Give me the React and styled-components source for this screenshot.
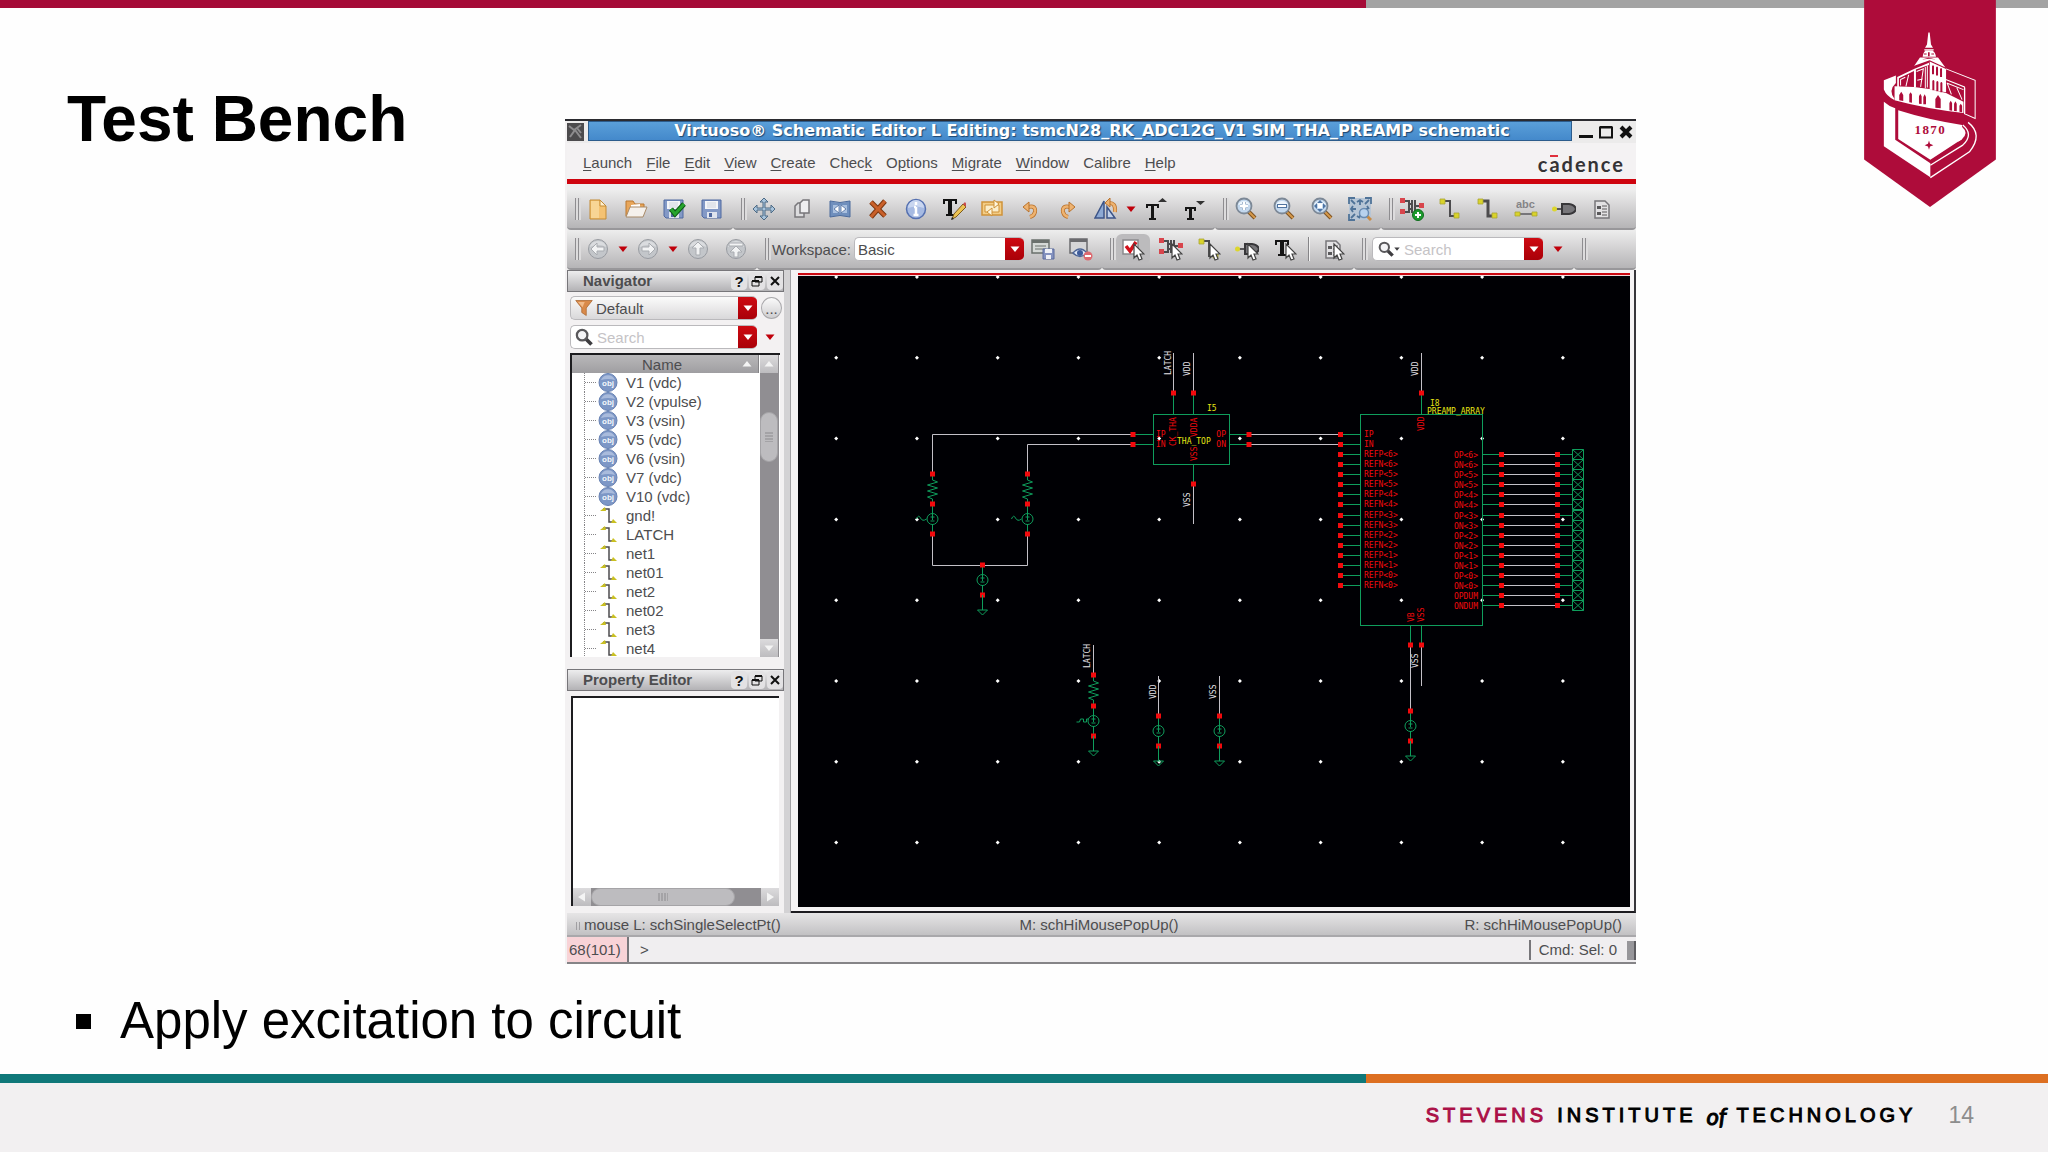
import React, { useState } from "react";
import styled, { createGlobalStyle } from "styled-components";

const GlobalStyle = createGlobalStyle`
  * {
    box-sizing: border-box;
  }
  body {
    margin: 0;
    background: #fefefe;
    font-family: "Liberation Sans", Arial, sans-serif;
  }
  button, input, select {
    font: inherit;
    color: inherit;
  }
`;

/* ---------- slide ---------- */

const Slide = styled.div`
  position: relative;
  display: flex;
  flex-direction: column;
  min-height: 100vh;
  overflow: hidden;
`;

const SplitBar = styled.div`
  flex: none;
  height: ${(p) => p.$size}px;
  background: linear-gradient(to right, ${(p) => p.$left} 66.7%, ${(p) => p.$right} 66.7%);
`;

const RibbonSvg = styled.svg`
  position: absolute;
  top: 0;
  right: 52px;
  width: 132px;
  height: 207px;
`;

const Body = styled.main`
  flex: 1;
  padding-top: 75px;
`;

const Top = styled.div`
  display: grid;
  grid-template-columns: 565fr 1071fr 412fr;
  align-items: start;
`;

const Title = styled.h1`
  margin: 0;
  padding-left: 67px;
  font-size: 64px;
  line-height: 72px;
  white-space: nowrap;
  color: #000;
`;

const Bullets = styled.ul`
  margin: 0;
  padding: 27px 0 0 76px;
  list-style: none;
`;

const Bullet = styled.li`
  display: flex;
  align-items: center;
  gap: 29px;
  font-size: 51px;
  line-height: 60px;
  color: #000;
  &::before {
    content: "";
    width: 15px;
    height: 15px;
    background: #000;
  }
`;

const Footer = styled.footer`
  display: flex;
  align-items: center;
  justify-content: flex-end;
  height: 69px;
  padding: 0 74px 4px 0;
  background: #f2f0f1;
`;

const School = styled.div`
  display: flex;
  align-items: center;
  gap: 10px;
  font-size: 20px;
  letter-spacing: 4px;
  color: #000;
  -webkit-text-stroke: 1px currentColor;
`;

const Crimson = styled.span`
  color: #ab1047;
`;

const Of = styled.em`
  font-family: Lato, sans-serif;
  font-size: 24px;
  letter-spacing: 0;
`;

const PageNo = styled.span`
  margin-left: 32px;
  font-size: 23px;
  color: #8d8d8d;
`;

/* ---------- editor window ---------- */

const Win = styled.section`
  margin-top: 36px;
  padding-left: 2px;
  border-top: 2px solid #2b2b30;
  background: #f3f1f2;
  font-size: 15px;
  color: #4d4d4f;
  overflow: hidden;
`;

const TitleBar = styled.header`
  display: flex;
  align-items: center;
  height: 22px;
  background: #ecebeb;
`;

const TitleText = styled.h2`
  flex: 1;
  height: 20px;
  margin: 0 4px 2px 4px;
  padding-left: 24px;
  border: 1px solid #2c5c8c;
  background: linear-gradient(#5a9fd9, #4489cb);
  color: #fff;
  font: bold 16px/18px "DejaVu Sans", sans-serif;
  text-align: center;
  text-shadow: 1px 1px 1px #1d4670;
  white-space: nowrap;
  overflow: hidden;
`;

const PlainButton = styled.button`
  display: flex;
  align-items: center;
  justify-content: center;
  flex: none;
  width: ${(p) => p.$w || 20}px;
  height: ${(p) => p.$h || 20}px;
  padding: 0;
  border: 0;
  background: none;
  cursor: pointer;
`;

const MenuBar = styled.nav`
  display: flex;
  align-items: center;
  justify-content: space-between;
  height: 36px;
  padding: 2px 11px 0 16px;
  background: #f4f2f3;
`;

const MenuList = styled.div`
  display: flex;
  gap: 14px;
`;

const MenuItem = styled.button`
  padding: 0;
  border: 0;
  background: none;
  cursor: pointer;
  u {
    text-underline-offset: 2px;
  }
`;

const Brand = styled.div`
  padding-top: 4px;
  font: bold 20px/24px Lato, sans-serif;
  letter-spacing: 2px;
  color: #353335;
`;

const Macron = styled.span`
  position: relative;
  &::before {
    content: "";
    position: absolute;
    top: 3px;
    left: 1px;
    width: 8px;
    height: 2px;
    background: #e0303c;
  }
`;

const RedRule = styled.div`
  height: 5px;
  background: #cf040e;
`;

const Toolbar = styled.div`
  display: flex;
  height: ${(p) => p.$h}px;
  padding-top: ${(p) => p.$pad || 0}px;
  background: #efeeee;
`;

const Group = styled.div`
  display: flex;
  align-items: center;
  flex: ${(p) => (p.$last ? "1 1 0" : "none")};
  padding-right: 2px;
  border-bottom: 2px solid #98979a;
  border-radius: 0 0 4px 4px;
  background: linear-gradient(#ededed, #d2d1d2 50%, #b5b4b6);
  overflow: hidden;
`;

const Grip = styled.i`
  flex: none;
  width: 6px;
  height: 22px;
  margin: 0 -2px 0 8px;
  background: repeating-linear-gradient(to right, #8e8d90 0 1px, #dddcdd 1px 3px);
`;

const Tool = styled(PlainButton)`
  width: 38px;
  height: 34px;
  border: 2px solid transparent;
  border-radius: 8px;
  background: ${(p) => (p.$active ? "#bcbbbd" : "none")};
  background-clip: padding-box;
`;

const ToolLine = styled.i`
  flex: none;
  width: 2px;
  height: 24px;
  margin: 0 4px;
  border-left: 1px solid #858487;
  border-right: 1px solid #f2f2f2;
`;

const FieldLabel = styled.label`
  width: 85px;
  padding-left: 3px;
`;

const Picker = styled.div`
  position: relative;
  display: flex;
  flex: ${(p) => (p.$w ? "none" : "1")};
  width: ${(p) => (p.$w ? p.$w + "px" : "auto")};
  height: 24px;
  margin-left: ${(p) => p.$ml || 0}px;
  border: 1px solid #bab9bc;
  border-right: 0;
  border-radius: 5px;
  background: ${(p) => (p.$grey ? "linear-gradient(#fbfbfb, #d9d8da)" : "#fff")};
  overflow: hidden;
`;

const Select = styled.select`
  flex: 1;
  min-width: 0;
  padding: 0 20px 0 ${(p) => p.$pl}px;
  border: 0;
  outline: 0;
  background: none;
  appearance: none;
`;

const SearchInput = styled.input`
  flex: 1;
  min-width: 0;
  padding: 0 4px;
  border: 0;
  outline: 0;
  background: none;
  &::placeholder {
    color: #c5c3c6;
    opacity: 1;
  }
`;

const RedEnd = styled.span`
  position: absolute;
  inset: -1px 0 -1px auto;
  display: flex;
  align-items: center;
  justify-content: center;
  width: 19px;
  border-radius: 0 4px 4px 0;
  background: linear-gradient(#cf0a12, #a80008);
  pointer-events: none;
`;

const RedButton = styled(PlainButton)`
  width: 19px;
  height: 24px;
  margin-top: -1px;
  background: linear-gradient(#cf0a12, #a80008);
`;

const PickerIcon = styled.span`
  display: flex;
  align-items: center;
  padding-left: ${(p) => p.$pl || 4}px;
`;

/* ---------- dock ---------- */

const Work = styled.div`
  display: flex;
`;

const Dock = styled.aside`
  display: flex;
  flex-direction: column;
  flex: none;
  width: 217px;
  padding-bottom: 7px;
`;

const PanelHead = styled.div`
  display: flex;
  align-items: center;
  height: 22px;
  padding: 0 0 0 15px;
  border: 1px solid #77767a;
  background: linear-gradient(#ededee, #b3b2b5);
  h3 {
    flex: 1;
    margin: 0;
    font-size: 15px;
    line-height: 20px;
  }
`;

const HeadButton = styled(PlainButton)`
  width: 16px;
  height: 18px;
  margin-left: 2px;
  border-radius: 4px;
  background: #e3e2e4;
  color: #111;
  font-size: 15px;
  font-weight: bold;
`;

const Row = styled.div`
  display: flex;
  align-items: center;
  height: 24px;
  margin-top: ${(p) => p.$mt}px;
  padding: 0 2px 0 3px;
`;

const RoundButton = styled(PlainButton)`
  width: 21px;
  height: 22px;
  margin-left: 4px;
  border: 1px solid #a9a8ab;
  border-radius: 50%;
  background: linear-gradient(#fafafa, #cfced0);
`;

const Tree = styled.div`
  display: flex;
  height: 304px;
  margin: 4px 4px 12px 3px;
  border-top: 2px solid #1c1c1f;
  border-left: 2px solid #1c1c1f;
  background: #fff;
  overflow: hidden;
`;

const TreeMain = styled.div`
  flex: 1;
  min-width: 0;
`;

const TreeHead = styled.div`
  display: flex;
  align-items: center;
  height: 18px;
  padding: 0 6px 0 70px;
  border-right: 1px solid #858487;
  background: linear-gradient(#b9b8ba, #9f9ea1);
  justify-content: space-between;
`;

const TreeList = styled.ul`
  margin: 0;
  padding: 0 0 0 12px;
  list-style: none;
`;

const TreeItem = styled.li`
  display: flex;
  align-items: center;
  height: 19px;
  border-left: 1px dotted #858487;
  white-space: nowrap;
  &::before {
    content: "";
    width: 11px;
    border-top: 1px dotted #858487;
  }
  svg {
    margin: 0 8px 0 2px;
  }
`;

const ScrollV = styled.div`
  display: flex;
  flex-direction: column;
  width: 19px;
  margin: 0 1px;
  background: #908e92;
`;

const ScrollH = styled.div`
  display: flex;
  height: 18px;
  background: #908e92;
`;

const ScrollEnd = styled(PlainButton)`
  width: 18px;
  height: 18px;
  background: linear-gradient(#dcdbdd, #bdbcbf);
`;

const Thumb = styled.div`
  display: flex;
  align-items: center;
  justify-content: center;
  width: ${(p) => p.$w};
  height: ${(p) => p.$h};
  margin: ${(p) => p.$m};
  border: 1px solid #a5a4a7;
  border-radius: 10px;
  background: #bdbcbf;
`;

const PropBox = styled.div`
  display: flex;
  flex-direction: column;
  justify-content: flex-end;
  flex: 1;
  margin: 5px 5px 0 4px;
  border-top: 2px solid #1c1c1f;
  border-left: 2px solid #1c1c1f;
  background: #fff;
`;

const Splitter = styled.div`
  flex: none;
  width: 7px;
  background: #d3d2d4;
  border-right: 1px solid #a2a1a4;
`;

const CanvasFrame = styled.div`
  flex: 1;
  min-width: 0;
  padding: 3px 4px 4px 7px;
  border-right: 2px solid #37363a;
  border-bottom: 2px solid #1d1c20;
  background: #f5f3f4;
`;

const CanvasTop = styled.div`
  height: 3px;
  border-top: 2px solid #cc0811;
  background: #f3d8da;
`;

const CanvasSvg = styled.svg`
  display: block;
  width: 100%;
  background: #000004;
`;

const StatusBar = styled.div`
  display: grid;
  grid-template-columns: 1fr auto 1fr;
  align-items: center;
  height: 24px;
  padding: 0 14px 0 9px;
  border-bottom: 2px solid #a9a8ab;
  background: linear-gradient(#e6e5e6, #c2c1c3);
  white-space: nowrap;
  span:last-child {
    text-align: right;
  }
`;

const StatusGrip = styled.i`
  display: inline-block;
  width: 6px;
  height: 8px;
  margin-right: 2px;
  background: repeating-linear-gradient(to right, #a09fa2 0 1px, transparent 1px 3px);
`;

const CommandLine = styled.div`
  display: flex;
  height: 27px;
  border-bottom: 2px solid #858487;
  background: #f0eef0;
  line-height: 25px;
`;

const Count = styled.span`
  width: 62px;
  padding-left: 2px;
  border-right: 2px solid #77767a;
  background: #f8d3d7;
`;

const Prompt = styled.label`
  padding: 0 4px 0 11px;
`;

const CommandInput = styled.input`
  flex: 1;
  border: 0;
  outline: 0;
  background: none;
`;

const Selection = styled.span`
  height: 20px;
  margin-top: 3px;
  padding: 0 10px 0 8px;
  border-left: 2px solid #77767a;
  line-height: 20px;
`;

const Sizer = styled.i`
  width: 9px;
  height: 19px;
  margin-top: 4px;
  background: #97969a;
  border-right: 2px solid #5e5d61;
`;

/* ---------- icons ---------- */

const Icon = ({ size = 24, children }) => (
  <svg width={size} height={size} viewBox="0 0 24 24" fill="none" aria-hidden="true">
    {children}
  </svg>
);

const Tri = ({ color = "#c0000b", dir = "down", size = 10 }) => (
  <svg width={size} height={size} viewBox="0 0 10 10" aria-hidden="true">
    <path
      fill={color}
      d={{ down: "M0.5 2.5h9L5 8z", up: "M0.5 7.5h9L5 2z", left: "M8 0.5v9L1 5z", right: "M2 0.5v9L9 5z" }[dir]}
    />
  </svg>
);

const Pointer = () => (
  <path d="M13 7v14l3-3 2 5 3-1-2-5h4z" fill="#fff" stroke="#444" strokeWidth="1.2" />
);

const Lens = ({ children }) => (
  <Icon>
    <path d="M14 14l7 7" stroke="#7d5222" strokeWidth="4" />
    <path d="M15 15l6 6" stroke="#d69a4b" strokeWidth="2" />
    <circle cx="10" cy="9" r="7.5" fill="#c3d8ee" stroke="#7c8896" strokeWidth="1.8" />
    <path d="M4 8a6.500 6.500 0 0 1 12 0q-6-2-12 0z" fill="#edf5fc" />
    {children}
  </Icon>
);

const Block = () => (
  <>
    <path d="M3 4h6v11H3M9 7h3M9 12h3M12 3v13M15 3v13M15 9h6" stroke="#4c4b4d" strokeWidth="2" />
    <path d="M0 1h5v5H0zM0 12h5v5H0zM19 6h5v5h-5z" fill="#d8454c" />
  </>
);

const Wire = ({ w = 2 }) => (
  <>
    <path d="M5 4h7v15h6" stroke="#4c4b4d" strokeWidth={w} />
    <path d="M2 2h5v5H2zM16 16h5v5h-5z" fill="#d9d32b" stroke="#a8a432" strokeWidth="0.8" />
  </>
);

const Pin = () => (
  <>
    <path d="M2 12h8" stroke="#5a595b" strokeWidth="2" />
    <circle cx="2.500" cy="12" r="2.500" fill="#dcd62e" />
    <path d="M10 7h7q6 1 7 5q-1 4-7 5h-7z" fill="#77767a" stroke="#38373a" strokeWidth="2" />
  </>
);

const Sheet = () => (
  <>
    <path d="M5 4h10l4 4v13H5z" fill="#e2e1e3" stroke="#77767a" strokeWidth="1.5" />
    <path d="M7 9h4v3H7zM7 15h4v3H7z" fill="#5a595b" />
    <path d="M12 9h5M12 12h5M12 15h5M12 18h5" stroke="#5a595b" strokeWidth="1" />
  </>
);

const Disk = () => (
  <>
    <path d="M2 3h19v18H4l-2-2z" fill="#8399c6" stroke="#4f68a0" />
    <path d="M5 4h13v8H5z" fill="#f4f5f8" />
    <path d="M7 6h9M7 8h9M7 10h9" stroke="#cfd4de" />
    <path d="M7 15h10v6H7z" fill="#dfe4ee" />
    <path d="M9 16h3v4H9z" fill="#4f68a0" />
  </>
);

const Round = ({ children }) => (
  <Icon>
    <circle cx="12" cy="12" r="9.500" fill="#c3c6ca" stroke="#989ba1" />
    <path d="M3.500 10a9 9 0 0 1 17 0q-8-4-17 0z" fill="#dadcdf" />
    <g fill="#f2f3f4" stroke="#a9acb1">{children}</g>
  </Icon>
);

const icons = {
  newFile: (
    <Icon>
      <path d="M4 3h10l6 6v13H4z" fill="#f4c272" stroke="#c38b35" />
      <path d="M5 4h8v17H5z" fill="#f8d595" />
      <path d="M14 3v6h6z" fill="#fff0cf" stroke="#c38b35" />
    </Icon>
  ),
  open: (
    <Icon>
      <path d="M2 19V4h7l2 3h9v4" fill="#e8a65a" stroke="#b9762e" />
      <path d="M7 8l9-1v4H7z" fill="#fff" />
      <path d="M2 20L6 10h17l-4 10z" fill="#f5f1ec" stroke="#a88a68" />
    </Icon>
  ),
  check: (
    <Icon>
      <Disk />
      <path d="M9 12l4 5L22 7" stroke="#0c5a12" strokeWidth="5" />
      <path d="M9 12l4 5L22 7" stroke="#26a42e" strokeWidth="3" />
    </Icon>
  ),
  save: <Icon><Disk /></Icon>,
  move: (
    <Icon>
      <path
        d="M12 1l4 4h-3v6h6V8l4 4-4 4v-3h-6v6h3l-4 4-4-4h3v-6H5v3l-4-4 4-4v3h6V5H8z"
        fill="#a9c4dc" stroke="#4c6a85"
      />
    </Icon>
  ),
  copy: (
    <Icon>
      <path d="M5 9l3-3h6v14H5z" fill="#dcdcde" stroke="#77767a" strokeWidth="1.500" />
      <path d="M10 6l3-3h6v13h-9z" fill="#eeeef0" stroke="#77767a" strokeWidth="1.500" />
    </Icon>
  ),
  stretch: (
    <Icon>
      <path d="M2 4q10 3 20 0v16q-10-3-20 0z" fill="#6f8fbd" stroke="#4a6a9c" />
      <path d="M5 8h14v8H5z" fill="#a9c0df" />
      <path d="M11 8v8l-5-4zM13 8v8l5-4z" fill="#fff" stroke="#4a6a9c" strokeWidth="0.800" />
    </Icon>
  ),
  remove: (
    <Icon>
      <path d="M5 5l14 14M19 4L5 20" stroke="#7d3710" strokeWidth="5" />
      <path d="M5 5l14 14M19 4L5 20" stroke="#c9602a" strokeWidth="3" />
    </Icon>
  ),
  info: (
    <Icon>
      <circle cx="12" cy="12" r="9.500" fill="#a6bae2" stroke="#5570b0" strokeWidth="1.500" />
      <path d="M4 11a8 8 0 0 1 16 0q-8-3-16 0z" fill="#c9d6f0" />
      <path d="M12 10v8M10 10h2M9.500 18h5M12 5v3" stroke="#fff" strokeWidth="2.500" />
    </Icon>
  ),
  label: (
    <Icon>
      <path d="M1 7V2h14v5h-2V4h-3v13h2v2H4v-2h2V4H3v3z" fill="#111" />
      <path d="M10 22l2-5L21 7l3 3-10 10z" fill="#ecc352" stroke="#7d5a1c" />
      <path d="M21 7l3 3 1-2-2-3z" fill="#c94a4a" />
      <path d="M9 23l1-3 2 2z" fill="#222" />
    </Icon>
  ),
  repeat: (
    <Icon>
      <path d="M2 5h20v13H2z" fill="#f3cd86" stroke="#cf9238" strokeWidth="1.500" />
      <path d="M5 8h14v7H5z" fill="#fbeecb" stroke="#cf9238" />
      <path d="M12 11v8l-5-4zM14 3v8l5-4z" fill="#fff7df" stroke="#cf9238" />
    </Icon>
  ),
  undo: (
    <Icon>
      <path d="M10 10q8-2 7 5q-1 4-5 5" stroke="#b9722c" strokeWidth="4" />
      <path d="M10 10q8-2 7 5q-1 4-5 5" stroke="#eeb371" strokeWidth="2.500" />
      <path d="M11 5v10l-6-5z" fill="#eeb371" stroke="#b9722c" />
    </Icon>
  ),
  redo: (
    <Icon>
      <path d="M14 10q-8-2-7 5q1 4 5 5" stroke="#b9722c" strokeWidth="4" />
      <path d="M14 10q-8-2-7 5q1 4 5 5" stroke="#eeb371" strokeWidth="2.500" />
      <path d="M13 5v10l6-5z" fill="#eeb371" stroke="#b9722c" />
    </Icon>
  ),
  rotate: (
    <Icon>
      <path d="M10 4v17H1z" fill="#8da9d4" stroke="#3c5488" strokeWidth="1.500" />
      <path d="M13 10l8 11h-8z" fill="#c1d1ea" stroke="#3c5488" strokeWidth="1.500" />
      <path d="M14 6q8-1 7 9" stroke="#b9722c" strokeWidth="4" />
      <path d="M14 6q8-1 7 9" stroke="#eeb371" strokeWidth="2.500" />
      <path d="M16 1v9l-5-4z" fill="#eeb371" stroke="#b9722c" />
    </Icon>
  ),
  bigger: (
    <Icon>
      <path d="M2 11V7h13v4h-2V9h-3v12h2v2H5v-2h2V9H4v2z" fill="#151515" />
      <path d="M14 5h9l-4.500-4z" fill="#333" />
    </Icon>
  ),
  smaller: (
    <Icon>
      <path d="M3 14v-4h11v4h-2v-2h-2v9h2v2H5v-2h2v-9H5v2z" fill="#151515" />
      <path d="M14 4h9l-4.500 4z" fill="#333" />
    </Icon>
  ),
  zoomIn: <Lens><path d="M10 5v8M6 9h8" stroke="#6d8cb2" strokeWidth="4" /><path d="M10 5v8M6 9h8" stroke="#fff" strokeWidth="2.800" /></Lens>,
  zoomOut: <Lens><path d="M5 9h10" stroke="#5074a0" strokeWidth="4" /><path d="M6 9h8" stroke="#fff" strokeWidth="2" /></Lens>,
  zoomSel: (
    <Lens>
      <path d="M10 3l3 3h-6zM10 15l3-3h-6zM4 9l3-3v6zM16 9l-3-3v6z" fill="#4e74a4" />
      <path d="M8 7h4v4H8z" fill="#fff" />
    </Lens>
  ),
  zoomFit: (
    <Icon>
      <path d="M1 1h22v22H1z" fill="#b7c6d6" />
      <path
        d="M1 7V1h6M17 1h6v6M1 17v6h6M7 7L3 3M17 7l4-4M7 17l-4 4M12 3v5M12 20v-5M3 12h5M20 12h-5M9 5l3-2 3 2M9 19l3 2M5 9l-2 3 2 3M19 9l2 3"
        stroke="#4f7398" strokeWidth="1.800"
      />
      <path d="M19 19l4 4" stroke="#c98b45" strokeWidth="3" />
      <circle cx="16" cy="16" r="4.500" fill="#b8d2ee" stroke="#6a8cb2" strokeWidth="1.500" />
    </Icon>
  ),
  instance: (
    <Icon>
      <Block />
      <circle cx="18" cy="18" r="5.500" fill="#1d9a2e" stroke="#0e6c1c" />
      <path d="M18 15v6M15 18h6" stroke="#fff" strokeWidth="2" />
    </Icon>
  ),
  wire: <Icon><Wire /></Icon>,
  wideWire: <Icon><Wire w={3} /></Icon>,
  wireName: (
    <Icon>
      <text x="2" y="11" fontSize="11" fontWeight="bold" fontFamily="Liberation Sans, sans-serif" fill="#858487">abc</text>
      <path d="M3 17h18" stroke="#77767a" strokeWidth="2" />
      <path d="M1 15h5v4H1zM18 15h5v4h-5z" fill="#d9d32b" stroke="#a8a432" strokeWidth="0.800" />
    </Icon>
  ),
  pin: <Icon><Pin /></Icon>,
  sheet: <Icon><Sheet /></Icon>,
  back: <Round><path d="M5 12l6-6v4h7v4h-7v4z" /></Round>,
  forward: <Round><path d="M19 12l-6-6v4H6v4h7v4z" /></Round>,
  up: <Round><path d="M12 5l6 6h-4v7h-4v-7H6z" /></Round>,
  top: <Round><path d="M5 6h14v3H5zM12 9l6 6h-4v5h-4v-5H6z" /></Round>,
  saveSpace: (
    <Icon>
      <path d="M1 3h17v13H1z" fill="#d5d9d6" stroke="#6a706c" strokeWidth="1.500" />
      <path d="M1 3h17v3H1z" fill="#6a706c" />
      <path d="M4 9h11M4 12h11" stroke="#6a706c" />
      <path d="M12 12h11v10H12z" fill="#8492bf" stroke="#5a6a9c" />
      <path d="M14 12h7v4h-7zM15 18h5v4h-5z" fill="#eef0f6" />
    </Icon>
  ),
  hideSpace: (
    <Icon>
      <path d="M1 2h17v14H1z" fill="#d5d5d7" stroke="#6a6a6e" strokeWidth="1.500" />
      <path d="M1 2h17v3H1z" fill="#6a6a6e" />
      <path d="M4 16q7-8 14 0q-7 7-14 0z" fill="#dfe8f6" stroke="#4d6596" strokeWidth="1.500" />
      <circle cx="11" cy="16" r="3" fill="#3f5c9a" />
      <circle cx="19" cy="19" r="4.500" fill="#dd6a70" />
      <path d="M16 19h6" stroke="#fff" strokeWidth="2" />
    </Icon>
  ),
  selAll: (
    <Icon>
      <path d="M2 3h15v14H2z" fill="#fff" stroke="#8b8a8d" strokeWidth="1.500" />
      <path d="M5 9l4 5 6-9" stroke="#d2121c" strokeWidth="3.500" />
      <Pointer />
    </Icon>
  ),
  selInst: <Icon><Block /><Pointer /></Icon>,
  selWire: <Icon><Wire /><Pointer /></Icon>,
  selPin: <Icon><Pin /><Pointer /></Icon>,
  selText: <Icon><path d="M2 8V3h14v5h-2V5h-3v12h2v2H5v-2h2V5H4v3z" fill="#151515" /><Pointer /></Icon>,
  selSheet: <Icon><Sheet /><Pointer /></Icon>,
};

const Magnifier = ({ size = 18 }) => (
  <Icon size={size}>
    <path d="M14 14l8 8" stroke="#3e3d40" strokeWidth="5" />
    <circle cx="9.500" cy="9.500" r="7" fill="#f4f4f6" stroke="#59585b" strokeWidth="3" />
  </Icon>
);

const Funnel = () => (
  <Icon size={18}>
    <path d="M1 2h22l-8 10v10l-6-4v-6z" fill="#d98a4a" stroke="#a86530" />
    <path d="M4 4h9l-3 7z" fill="#f1bb8a" />
  </Icon>
);

const ObjIcon = () => (
  <svg width="20" height="19" viewBox="0 0 20 19" aria-hidden="true">
    <circle cx="10" cy="9.500" r="9" fill="#7d97c6" stroke="#6580b2" />
    <path d="M3 7a7.500 7.500 0 0 1 14 0q-7-2-14 0z" fill="#a9bbdc" />
    <text x="10" y="13" textAnchor="middle" fontSize="8" fontWeight="bold" fontFamily="Liberation Sans, sans-serif" fill="#f4f7fd">obj</text>
  </svg>
);

const NetIcon = () => (
  <svg width="20" height="19" viewBox="0 0 20 19" fill="none" aria-hidden="true">
    <path d="M5 3h6v13h5" stroke="#4c4b4e" strokeWidth="1.500" />
    <path d="M2 5l5-4 1 4zM13 17l2-4 4 4z" fill="#c9c021" />
  </svg>
);

const Ribs = ({ vertical }) => (
  <svg width="10" height="10" viewBox="0 0 10 10" aria-hidden="true">
    <path
      d={vertical ? "M1 1v8M4 1v8M7 1v8M10 1v8" : "M1 1h8M1 4h8M1 7h8M1 10h8"}
      stroke="#8b8a8d"
    />
  </svg>
);

/* ---------- schematic ---------- */

const GREEN = "#0f9d5c";
const WIRE = "#c3c0c7";
const RED = "#f20a0d";
const YELLOW = "#e6e614";

const PITCH = 10.07;
const pinY = (i) => Math.round(434 + i * PITCH);

const leftPins = ["IP", "IN"];
const rightPins = [];
for (let n = 6; n >= 0; n--) {
  leftPins.push(`REFP<${n}>`, `REFN<${n}>`);
  rightPins.push(`OP<${n}>`, `ON<${n}>`);
}
rightPins.push("OPDUM", "ONDUM");

const dots = [];
for (let r = 0; r < 8; r++) {
  for (let c = 0; c < 10; c++) {
    dots.push([836.2 + c * 80.74, 277 + r * 80.8]);
  }
}

const Sq = ({ x, y }) => <rect x={x - 2.500} y={y - 2.500} width="5" height="5" fill={RED} stroke="none" />;

const Label = ({ x, y, color = WIRE, end, children }) => (
  <text x={x} y={y + 3} fill={color} textAnchor={end ? "end" : "start"}>{children}</text>
);

// text that reads upwards, starting at (x, y)
const VLabel = ({ x, y, color = "#e4e2e6", children }) => (
  <text transform={`translate(${x + 3} ${y}) rotate(-90)`} fill={color}>{children}</text>
);

const Resistor = ({ x, y }) => (
  <path
    d={`M${x} ${y}v6l5 2l-10 3l10 3l-10 3l10 3l-10 3l5 2v6`}
    stroke={GREEN}
  />
);

const Source = ({ x, y, kind }) => (
  <g stroke={GREEN}>
    <path d={`M${x} ${y}v10M${x} ${y + 20}v10M${x} ${y + 10}v6M${x - 2} ${y + 13}h4M${x - 2} ${y + 17}h4`} />
    <circle cx={x} cy={y + 15} r="5.500" />
    {kind === "sin" && <path d={`M${x - 16} ${y + 15}q2 -5 4 -1t6 1`} />}
    {kind === "pulse" && <path d={`M${x - 17} ${y + 16}h3l1 -3h3v3h3v-3h2`} />}
    <Sq x={x} y={y} />
    <Sq x={x} y={y + 30} />
  </g>
);

const Ground = ({ x, y }) => (
  <path d={`M${x} ${y}v15M${x - 5} ${y + 15}h10l-5 5z`} stroke={GREEN} />
);

const Schematic = () => (
  <CanvasSvg
    viewBox="798 276 832 631"
    fill="none"
    fontFamily="DejaVu Sans Mono, monospace"
    fontSize="8"
    role="img"
    aria-label="Test bench schematic"
  >
    {dots.map(([x, y]) => (
      <path key={`${x}-${y}`} d={`M${x} ${y - 2}l2 2l-2 2l-2 -2z`} fill="#fff" />
    ))}

    {/* inputs */}
    <path d="M932.500 474V434.500H1133M1027.500 474V444.500H1133M932.500 534V565.500H1027.500V534" stroke={WIRE} />
    {[932.5, 1027.5].map((x) => (
      <g key={x}>
        <Resistor x={x} y={474} />
        <Sq x={x} y={474} />
        <Source x={x} y={504} kind="sin" />
      </g>
    ))}
    <Source x={982.5} y={565} />
    <Ground x={982.5} y={595} />

    {/* THA */}
    <rect x="1153.500" y="414.500" width="76" height="50" stroke={GREEN} />
    <path d="M1173.500 393v21M1193.500 393v21M1193.500 464v20M1133 434.500h20M1133 444.500h20M1229 434.500h20M1229 444.500h20" stroke={GREEN} />
    <path d="M1173.500 353v40M1193.500 353v40M1193.500 484v40M1249 434.500h91M1249 444.500h91" stroke={WIRE} />
    {[[1173.5, 393], [1193.5, 393], [1193.5, 484], [1133, 434.5], [1133, 444.5], [1249, 434.5], [1249, 444.5]].map(([x, y]) => (
      <Sq key={`${x}-${y}`} x={x} y={y} />
    ))}
    <VLabel x={1168} y={375}>LATCH</VLabel>
    <VLabel x={1187} y={376}>VDD</VLabel>
    <VLabel x={1187} y={507}>VSS</VLabel>
    <VLabel x={1173} y={446} color={RED}>CK_THA</VLabel>
    <VLabel x={1194} y={437} color={RED}>VDDA</VLabel>
    <VLabel x={1194} y={461} color={RED}>VSS</VLabel>
    <Label x={1156} y={434} color={RED}>IP</Label>
    <Label x={1156} y={444} color={RED}>IN</Label>
    <Label x={1226} y={434} color={RED} end>OP</Label>
    <Label x={1226} y={444} color={RED} end>ON</Label>
    <Label x={1207} y={408} color={YELLOW}>I5</Label>
    <Label x={1177} y={441} color={YELLOW}>THA_TOP</Label>

    {/* preamp array */}
    <rect x="1360.500" y="414.500" width="122" height="211" stroke={GREEN} />
    <path d="M1421.500 393v21M1410.500 625v20M1421.500 625v20" stroke={GREEN} />
    <path d="M1421.500 353v40M1410.500 645v66M1421.500 645v41" stroke={WIRE} />
    <Sq x={1421.5} y={393} />
    <Sq x={1410.5} y={645} />
    <Sq x={1421.5} y={645} />
    <VLabel x={1415} y={376}>VDD</VLabel>
    <VLabel x={1421} y={431} color={RED}>VDD</VLabel>
    <VLabel x={1411} y={622} color={RED}>VB</VLabel>
    <VLabel x={1421} y={622} color={RED}>VSS</VLabel>
    <VLabel x={1415} y={668}>VSS</VLabel>
    <Label x={1430} y={403} color={YELLOW}>I8</Label>
    <Label x={1427} y={411} color={YELLOW}>PREAMP_ARRAY</Label>
    {leftPins.map((name, i) => (
      <g key={name}>
        <path d={`M1340 ${pinY(i) + 0.5}h20`} stroke={GREEN} />
        <Sq x={1340.5} y={pinY(i) + 0.5} />
        <Label x={1364} y={pinY(i)} color={RED}>{name}</Label>
      </g>
    ))}
    {rightPins.map((name, i) => {
      const y = pinY(i + 2) + 0.5;
      return (
        <g key={name}>
          <path d={`M1482 ${y}h20M1557 ${y}h15M1572.500 ${y - 5}h11v10h-11zl11 10m0 -10l-11 10`} stroke={GREEN} />
          <path d={`M1502 ${y}h55`} stroke={WIRE} />
          <Sq x={1501.5} y={y} />
          <Sq x={1557.5} y={y} />
          <Label x={1478} y={y} color={RED} end>{name}</Label>
        </g>
      );
    })}
    <Source x={1410.5} y={711} />
    <Ground x={1410.5} y={741} />

    {/* clock and supplies */}
    <path d="M1093.500 645v30M1158.500 676v40M1219.500 676v40" stroke={WIRE} />
    <VLabel x={1087} y={668}>LATCH</VLabel>
    <Resistor x={1093.5} y={675} />
    <Sq x={1093.5} y={675} />
    <Source x={1093.5} y={706} kind="pulse" />
    <Ground x={1093.5} y={736} />
    <VLabel x={1153} y={699}>VDD</VLabel>
    <Source x={1158.5} y={716} />
    <Ground x={1158.5} y={746} />
    <VLabel x={1213} y={699}>VSS</VLabel>
    <Source x={1219.5} y={716} />
    <Ground x={1219.5} y={746} />
  </CanvasSvg>
);

/* ---------- crest ---------- */

const Ribbon = () => (
  <RibbonSvg viewBox="73 0 394 619" role="img" aria-label="1870">
    <path d="M73 0h394v477L270 619L73 477z" fill="#ae0c3a" />
    {/* spire, cupola and tower */}
    <g fill="#fff">
      <path d="M265 97h4l4 36 6 10h-24l6-10z" />
      <path d="M253 147h28v4h-28zM248 170q2-14 8-18h22q8 4 10 18z" />
      <path d="M240 172h54l22 30-47-22-44 16-3 2z" />
      <path d="M269 184l49 22v70l-49-8z" />
      <path d="M222 206l45-18v6l-39 14v54h-6z" />
      <path d="M172 230l50-24v6l-45 22v26h-5z" />
      <path d="M132 240l36-14v22q-24 22-4 48l-2 2q-22-10-30-30z" />
      <path d="M164 258l58 2 46 6 50 12 52 26v34q-110-12-206-38z" />
    </g>
    <g fill="none" stroke="#fff" strokeWidth="3">
      <path d="M318 206l87 34v114l-32-14V260l-56-22M374 262v76" />
      <path d="M322 250l12 32M350 262l16 36M320 248l50 20M182 256v-18l14-7M198 258l8-34M230 214l20-8-8 54M232 240l16-4M256 200v64M262 196v66" />
    </g>
    <g fill="#ae0c3a">
      <path d="M252 160h8v3h-8zM264 156h5v12h-5zM274 160h8v3h-8zM246 178l20-5 22 5-20-2z" />
      <path d="M276 198q3-6 6 0v24h-6zM288 202q3-6 6 0v24h-6zM300 206q3-6 6 0v24h-6zM277 242q3-6 6 0v28h-6zM289 245q3-6 6 0v28h-6zM301 248q3-6 6 0v28h-6z" />
      <path d="M178 300v-16l6-10 6 10v18zM208 306v-24l4-6 4 6v25zM237 310v-22l4-8 4 8v23zM250 312v-22l4-8 4 8v22zM286 322v-26l8-12 8 12v28zM328 330v-22l4-7 4 7v23zM342 332v-22l4-7 4 7v23zM358 334v-18l4-6 4 6v20z" />
    </g>
    {/* shield */}
    <path d="M132 304q16 14 34 20v94l105 70v42L132 437z" fill="#fff" />
    <path d="M175 330q88 28 191 44v42l-95 62-96-62z" fill="#fff" />
    <path d="M368 374q34 28 0 60l-97 60M384 366q46 36 4 88L271 531" fill="none" stroke="#fff" strokeWidth="4" />
    <path d="M366 380q22 18-2 38l-10 6z" fill="#fff" />
    <path d="M267 420l3 10 10 4-10 4-3 10-3-10-10-4 10-4z" fill="#ae0c3a" />
    <text x="271" y="401" textAnchor="middle" fontFamily="Liberation Serif, serif" fontWeight="bold" fontSize="39" letterSpacing="4" fill="#ae0c3a">1870</text>
  </RibbonSvg>
);

/* ---------- page ---------- */

const menus = [
  ["", "L", "aunch"], ["", "F", "ile"], ["", "E", "dit"], ["", "V", "iew"], ["", "C", "reate"],
  ["Chec", "k", ""], ["O", "p", "tions"], ["", "M", "igrate"], ["", "W", "indow"], ["Calibre", "", ""], ["", "H", "elp"],
];

const objects = ["V1 (vdc)", "V2 (vpulse)", "V3 (vsin)", "V5 (vdc)", "V6 (vsin)", "V7 (vdc)", "V10 (vdc)"];
const nets = ["gnd!", "LATCH", "net1", "net01", "net2", "net02", "net3", "net4"];

const Tools = ({ names, active, onPick }) =>
  names.map((name) =>
    name === "|" ? (
      <ToolLine key="line" />
    ) : name[0] === "v" ? (
      <PlainButton key={name} $w={12} aria-label="More"><Tri /></PlainButton>
    ) : (
      <Tool key={name} aria-label={name} $active={name === active} onClick={() => onPick && onPick(name)}>
        {icons[name]}
      </Tool>
    )
  );

const PanelTitle = ({ children }) => (
  <PanelHead>
    <h3>{children}</h3>
    <HeadButton aria-label="Help">?</HeadButton>
    <HeadButton aria-label="Float">
      <svg width="12" height="12" viewBox="0 0 12 12" fill="none" stroke="#111" aria-hidden="true">
        <path d="M4 1.500h7M4 2.500h7M4 2v5h7V2M1 5.500h7M1 6.500h7M1 6v5h7V6" />
      </svg>
    </HeadButton>
    <HeadButton aria-label="Close">
      <svg width="12" height="12" viewBox="0 0 12 12" stroke="#111" strokeWidth="2" aria-hidden="true">
        <path d="M2 2l8 8M10 2l-8 8" />
      </svg>
    </HeadButton>
  </PanelHead>
);

const App = () => {
  const [mode, setMode] = useState("selAll");
  const [query, setQuery] = useState("");
  const [navQuery, setNavQuery] = useState("");

  return (
    <Slide>
      <GlobalStyle />
      <SplitBar $size={8} $left="#a50b37" $right="#a3a3a3" />
      <Ribbon />
      <Body>
        <Top>
          <Title>Test Bench</Title>
          <Win>
            <TitleBar>
              <svg width="17" height="18" viewBox="0 0 17 18" aria-hidden="true">
                <path d="M0 0h17v18H0z" fill="#4c4b4d" />
                <path d="M2 3l5 4 7-5M3 14l5-7 6 8M10 5l4 5" stroke="#8d8c8e" fill="none" strokeWidth="2" />
              </svg>
              <TitleText>
                Virtuoso® Schematic Editor L Editing: tsmcN28_RK_ADC12G_V1 SIM_THA_PREAMP schematic
              </TitleText>
              <PlainButton aria-label="Minimize">
                <svg width="14" height="14" viewBox="0 0 14 14"><path d="M0 10h14v3H0z" fill="#111" /></svg>
              </PlainButton>
              <PlainButton aria-label="Maximize">
                <svg width="14" height="14" viewBox="0 0 14 14"><path d="M1 2.500h12v10H1zM1 2h12" fill="none" stroke="#111" strokeWidth="2" /></svg>
              </PlainButton>
              <PlainButton aria-label="Close">
                <svg width="14" height="14" viewBox="0 0 14 14"><path d="M2 2l10 10M12 2L2 12" stroke="#111" strokeWidth="4" /></svg>
              </PlainButton>
            </TitleBar>
            <MenuBar>
              <MenuList>
                {menus.map(([a, key, b]) => (
                  <MenuItem key={a + key + b}>{a}<u>{key}</u>{b}</MenuItem>
                ))}
              </MenuList>
              <Brand>c<Macron>a</Macron>dence</Brand>
            </MenuBar>
            <RedRule />

            <Toolbar $h={46} $pad={6}>
              <Group><Grip /><Tools names={["newFile", "open", "check", "save"]} /></Group>
              <Group>
                <Grip />
                <Tools names={["move", "copy", "stretch", "remove", "info", "label", "repeat", "undo", "redo", "rotate", "v1", "bigger", "smaller"]} />
              </Group>
              <Group><Grip /><Tools names={["zoomIn", "zoomOut", "zoomSel", "zoomFit"]} /></Group>
              <Group $last><Grip /><Tools names={["instance", "wire", "wideWire", "wireName", "pin", "sheet"]} /></Group>
            </Toolbar>

            <Toolbar $h={40}>
              <Group><Grip /><Tools names={["back", "v1", "forward", "v2", "up", "top"]} /></Group>
              <Group>
                <Grip />
                <FieldLabel htmlFor="workspace">Workspace:</FieldLabel>
                <Picker $w={170}>
                  <Select id="workspace" $pl={3}><option>Basic</option></Select>
                  <RedEnd><Tri color="#fff" /></RedEnd>
                </Picker>
                <Tools names={["saveSpace", "hideSpace"]} />
              </Group>
              <Group>
                <Grip />
                <Tools names={["selAll", "selInst", "selWire", "selPin", "selText", "|", "selSheet"]} active={mode} onPick={setMode} />
              </Group>
              <Group>
                <Grip />
                <Picker $w={171} $ml={6}>
                  <PickerIcon $pl={5}><Magnifier size={16} /><Tri color="#3e3d40" size={6} /></PickerIcon>
                  <SearchInput aria-label="Search" placeholder="Search" value={query} onChange={(e) => setQuery(e.target.value)} />
                  <RedButton aria-label="Search options"><Tri color="#fff" /></RedButton>
                </Picker>
                <PlainButton $w={29} aria-label="More"><Tri /></PlainButton>
              </Group>
              <Group $last><Grip /></Group>
            </Toolbar>

            <Work>
              <Dock>
                <PanelTitle>Navigator</PanelTitle>
                <Row $mt={4}>
                  <Picker $grey>
                    <PickerIcon><Funnel /></PickerIcon>
                    <Select aria-label="Filter" $pl={3}><option>Default</option></Select>
                    <RedEnd><Tri color="#fff" /></RedEnd>
                  </Picker>
                  <RoundButton aria-label="Filter settings">...</RoundButton>
                </Row>
                <Row $mt={5}>
                  <Picker>
                    <PickerIcon><Magnifier /></PickerIcon>
                    <SearchInput aria-label="Search objects" placeholder="Search" value={navQuery} onChange={(e) => setNavQuery(e.target.value)} />
                    <RedButton aria-label="Search history"><Tri color="#fff" /></RedButton>
                  </Picker>
                  <PlainButton $w={25} aria-label="More"><Tri /></PlainButton>
                </Row>
                <Tree>
                  <TreeMain>
                    <TreeHead>Name<Tri color="#f4f4f4" dir="up" /></TreeHead>
                    <TreeList>
                      {objects.map((name) => <TreeItem key={name}><ObjIcon />{name}</TreeItem>)}
                      {nets.map((name) => <TreeItem key={name}><NetIcon />{name}</TreeItem>)}
                    </TreeList>
                  </TreeMain>
                  <ScrollV>
                    <ScrollEnd aria-label="Scroll up"><Tri color="#f4f4f4" dir="up" /></ScrollEnd>
                    <Thumb $w="18px" $h="50px" $m="39px 0 auto"><Ribs /></Thumb>
                    <ScrollEnd aria-label="Scroll down"><Tri color="#f4f4f4" /></ScrollEnd>
                  </ScrollV>
                </Tree>
                <PanelTitle>Property Editor</PanelTitle>
                <PropBox>
                  <ScrollH>
                    <ScrollEnd aria-label="Scroll left"><Tri color="#f4f4f4" dir="left" /></ScrollEnd>
                    <Thumb $w="70%" $h="18px" $m="0 auto 0 0"><Ribs vertical /></Thumb>
                    <ScrollEnd aria-label="Scroll right"><Tri color="#f4f4f4" dir="right" /></ScrollEnd>
                  </ScrollH>
                </PropBox>
              </Dock>
              <Splitter />
              <CanvasFrame>
                <CanvasTop />
                <Schematic />
              </CanvasFrame>
            </Work>

            <StatusBar>
              <span><StatusGrip />mouse L: schSingleSelectPt()</span>
              <span>M: schHiMousePopUp()</span>
              <span>R: schHiMousePopUp()</span>
            </StatusBar>
            <CommandLine>
              <Count>68(101)</Count>
              <Prompt htmlFor="command">&gt;</Prompt>
              <CommandInput id="command" />
              <Selection>Cmd: Sel: 0</Selection>
              <Sizer />
            </CommandLine>
          </Win>
        </Top>
        <Bullets>
          <Bullet>Apply excitation to circuit</Bullet>
        </Bullets>
      </Body>
      <SplitBar $size={9} $left="#0f7879" $right="#dd6f21" />
      <Footer>
        <School>
          <Crimson>STEVENS</Crimson>
          <span>INSTITUTE</span>
          <Of>of</Of>
          <span>TECHNOLOGY</span>
        </School>
        <PageNo>14</PageNo>
      </Footer>
    </Slide>
  );
};

export default App;
